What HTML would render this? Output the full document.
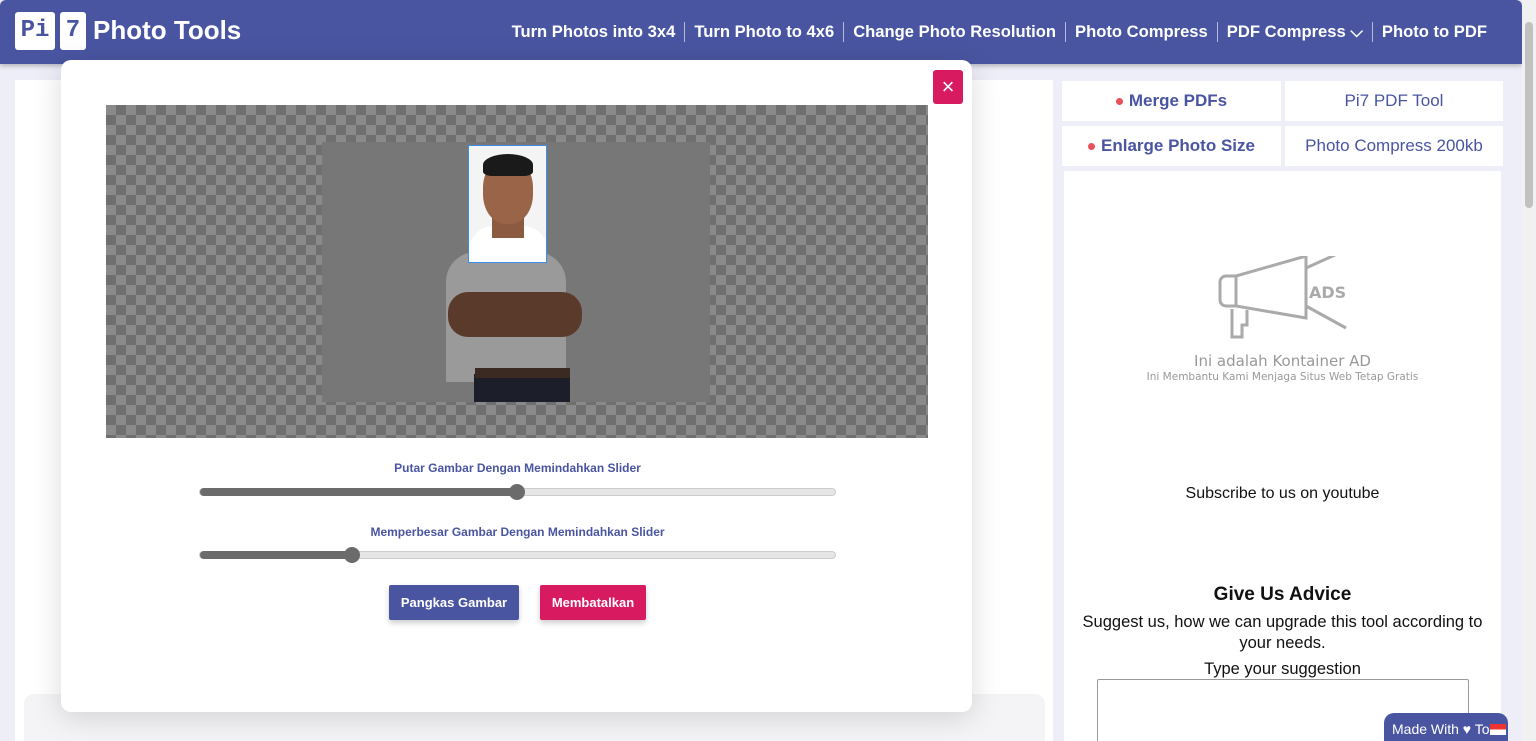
<!DOCTYPE html>
<html><head><meta charset="utf-8"><style>
*{box-sizing:border-box;margin:0;padding:0}
html,body{width:1536px;height:741px;overflow:hidden}
body{background:#eeeef9;font-family:"Liberation Sans",sans-serif;position:relative}
.hdr{position:absolute;left:0;top:0;width:1522px;height:64px;background:#4a55a2;border-radius:6px 6px 0 0;box-shadow:0 2px 5px rgba(0,0,0,.25)}
.logo{position:absolute;top:12px;height:38px;background:#fff;border-radius:3px;color:#4a55a2;font:bold 24px "Liberation Mono",monospace;text-align:center;line-height:38px}
.nav{position:absolute;right:26px;top:22px;color:#fff;font-weight:bold;font-size:16.6px;display:flex}
.nav span{padding:0 9px;border-left:1px solid rgba(255,255,255,.6)}
.nav span:first-child{border:none}
.abs{position:absolute}
.btn{position:absolute;background:#fff;color:#4a55a2;font-size:17px;text-align:center;line-height:40px}
.dot{display:inline-block;width:7px;height:7px;border-radius:50%;background:#e8505b;margin-right:6px;vertical-align:middle}
.track{position:absolute;left:199px;width:637px;height:8px;border-radius:4px;background:#e6e6e6;border:1px solid #ccc}
.fill{position:absolute;left:0;top:-1px;height:8px;background:#6b6b6b;border-radius:4px}
.thumb{position:absolute;width:16px;height:16px;border-radius:50%;background:#6b6b6b;top:-5px}
</style></head><body>
<div class="hdr">
<div class="logo" style="left:15px;width:40px">Pi</div>
<div class="logo" style="left:60px;width:26px">7</div>
<div class="abs" style="left:93px;top:15px;color:#fff;font-weight:bold;font-size:26px">Photo Tools</div>
<div class="nav"><span>Turn Photos into 3x4</span><span>Turn Photo to 4x6</span><span>Change Photo Resolution</span><span>Photo Compress</span><span>PDF Compress ⌵</span><span>Photo to PDF</span></div>
</div>
<div class="abs" style="left:15px;top:80px;width:1038px;height:661px;background:#fff"></div>
<div class="abs" style="left:24px;top:694px;width:1021px;height:60px;background:#f4f4f6;border-radius:10px"></div>
<div class="btn" style="left:1062px;top:81px;width:219px;font-weight:bold"><span class="dot"></span>Merge PDFs</div>
<div class="btn" style="left:1285px;top:81px;width:218px">Pi7 PDF Tool</div>
<div class="btn" style="left:1062px;top:126px;width:219px;font-weight:bold"><span class="dot"></span>Enlarge Photo Size</div>
<div class="btn" style="left:1285px;top:126px;width:218px">Photo Compress 200kb</div>
<div class="abs" style="left:1064px;top:171px;width:437px;height:570px;background:#fff;text-align:center;overflow:hidden">
<svg style="position:absolute;left:150px;top:85px" width="140" height="90" viewBox="0 0 140 90" fill="none" stroke="#aaa" stroke-width="3"><path d="M12 20h10v30H12a6 6 0 0 1-6-6V26a6 6 0 0 1 6-6zM22 20l70-20v62L22 50zM92 12l40-18M92 50l40 22M18 53v28h10v-12h5v-15"/><text x="95" y="42" fill="#aaa" stroke="none" font-size="16" font-weight="bold" font-family="DejaVu Sans">ADS</text></svg>
<div class="abs" style="left:0;width:437px;top:181px;color:#999;font-size:15px;font-family:'DejaVu Sans',sans-serif">Ini adalah Kontainer AD</div>
<div class="abs" style="left:0;width:437px;top:200px;color:#999;font-size:10.5px;font-family:'DejaVu Sans',sans-serif">Ini Membantu Kami Menjaga Situs Web Tetap Gratis</div>
<div class="abs" style="left:0;width:437px;top:314px;font-size:16px;color:#111">Subscribe to us on youtube</div>
<div class="abs" style="left:0;width:437px;top:413px;font-size:19px;font-weight:bold;color:#111">Give Us Advice</div>
<div class="abs" style="left:0;width:437px;top:441px;font-size:16.5px;color:#111;line-height:21px;padding:0 8px">Suggest us, how we can upgrade this tool according to your needs.</div>
<div class="abs" style="left:0;width:437px;top:489px;font-size:16.5px;color:#111">Type your suggestion</div>
<div class="abs" style="left:33px;top:508px;width:372px;height:70px;border:1px solid #999;border-radius:2px"></div>
</div>
<div class="abs" style="left:1384px;top:713px;width:124px;height:28px;background:#4a55a2;border-radius:10px 10px 0 0;color:#fff;font-size:14px;padding:8px 0 0 8px">Made With ♥ To<span style="display:inline-block;width:16px;height:11px;background:linear-gradient(#e33 50%,#fff 50%);vertical-align:-1px"></span></div>
<div class="abs" style="left:1522px;top:0;width:14px;height:741px;background:#f1f1f1"></div>
<div class="abs" style="left:1525px;top:22px;width:8px;height:186px;background:#c1c1c1;border-radius:4px"></div>
<div class="abs" style="left:61px;top:60px;width:911px;height:652px;background:#fff;border-radius:10px;box-shadow:0 5px 30px rgba(0,0,0,.15)"></div>
<div class="abs" style="left:933px;top:70px;width:30px;height:34px;background:#d81b60;border-radius:3px;color:#fff;font-size:22px;text-align:center;line-height:34px">×</div>
<div class="abs" style="left:106px;top:105px;width:822px;height:333px;background-color:#8a8a8a;background-image:linear-gradient(45deg,#6f6f6f 25%,transparent 25%,transparent 75%,#6f6f6f 75%),linear-gradient(45deg,#6f6f6f 25%,transparent 25%,transparent 75%,#6f6f6f 75%);background-size:20px 20px;background-position:0 0,10px 10px"></div>
<div class="abs" style="left:322px;top:142px;width:388px;height:260px;background:#777;overflow:hidden">
<div class="abs" style="left:124px;top:110px;width:120px;height:130px;background:#9a9a9a;border-radius:30px 30px 0 0"></div>
<div class="abs" style="left:126px;top:150px;width:134px;height:45px;background:#5a3a2a;border-radius:20px"></div>
<div class="abs" style="left:152px;top:232px;width:96px;height:30px;background:#1c1f2a"></div>
<div class="abs" style="left:153px;top:226px;width:95px;height:10px;background:#3a2a22"></div>
</div>
<div class="abs" style="left:468px;top:145px;width:79px;height:118px;background:#f4f4f4;border:1px solid #3a8ef0;overflow:hidden">
<div class="abs" style="left:0;top:80px;width:79px;height:40px;background:#fff;border-radius:25px 25px 0 0"></div>
<div class="abs" style="left:23px;top:62px;width:32px;height:30px;background:#8b5a40"></div>
<div class="abs" style="left:14px;top:12px;width:50px;height:66px;background:#9a6448;border-radius:45%"></div>
<div class="abs" style="left:14px;top:8px;width:50px;height:22px;background:#1a1a1a;border-radius:50% 50% 20% 20%"></div>
</div>
<div class="abs" style="left:385px;top:461px;width:265px;text-align:center;color:#4a55a2;font-size:12px;font-weight:bold">Putar Gambar Dengan Memindahkan Slider</div>
<div class="track" style="top:488px"><div class="fill" style="width:318px"></div><div class="thumb" style="left:309px"></div></div>
<div class="abs" style="left:300px;top:525px;width:435px;text-align:center;color:#4a55a2;font-size:12px;font-weight:bold">Memperbesar Gambar Dengan Memindahkan Slider</div>
<div class="track" style="top:551px"><div class="fill" style="width:153px"></div><div class="thumb" style="left:144px"></div></div>
<div class="abs" style="left:389px;top:585px;width:130px;height:35px;background:#4a55a2;color:#fff;font-size:13px;font-weight:bold;text-align:center;line-height:35px;border-radius:2px;box-shadow:0 3px 6px rgba(0,0,0,.2)">Pangkas Gambar</div>
<div class="abs" style="left:540px;top:585px;width:106px;height:35px;background:#d81b60;color:#fff;font-size:13px;font-weight:bold;text-align:center;line-height:35px;border-radius:2px;box-shadow:0 3px 6px rgba(0,0,0,.2)">Membatalkan</div>
</body></html>
